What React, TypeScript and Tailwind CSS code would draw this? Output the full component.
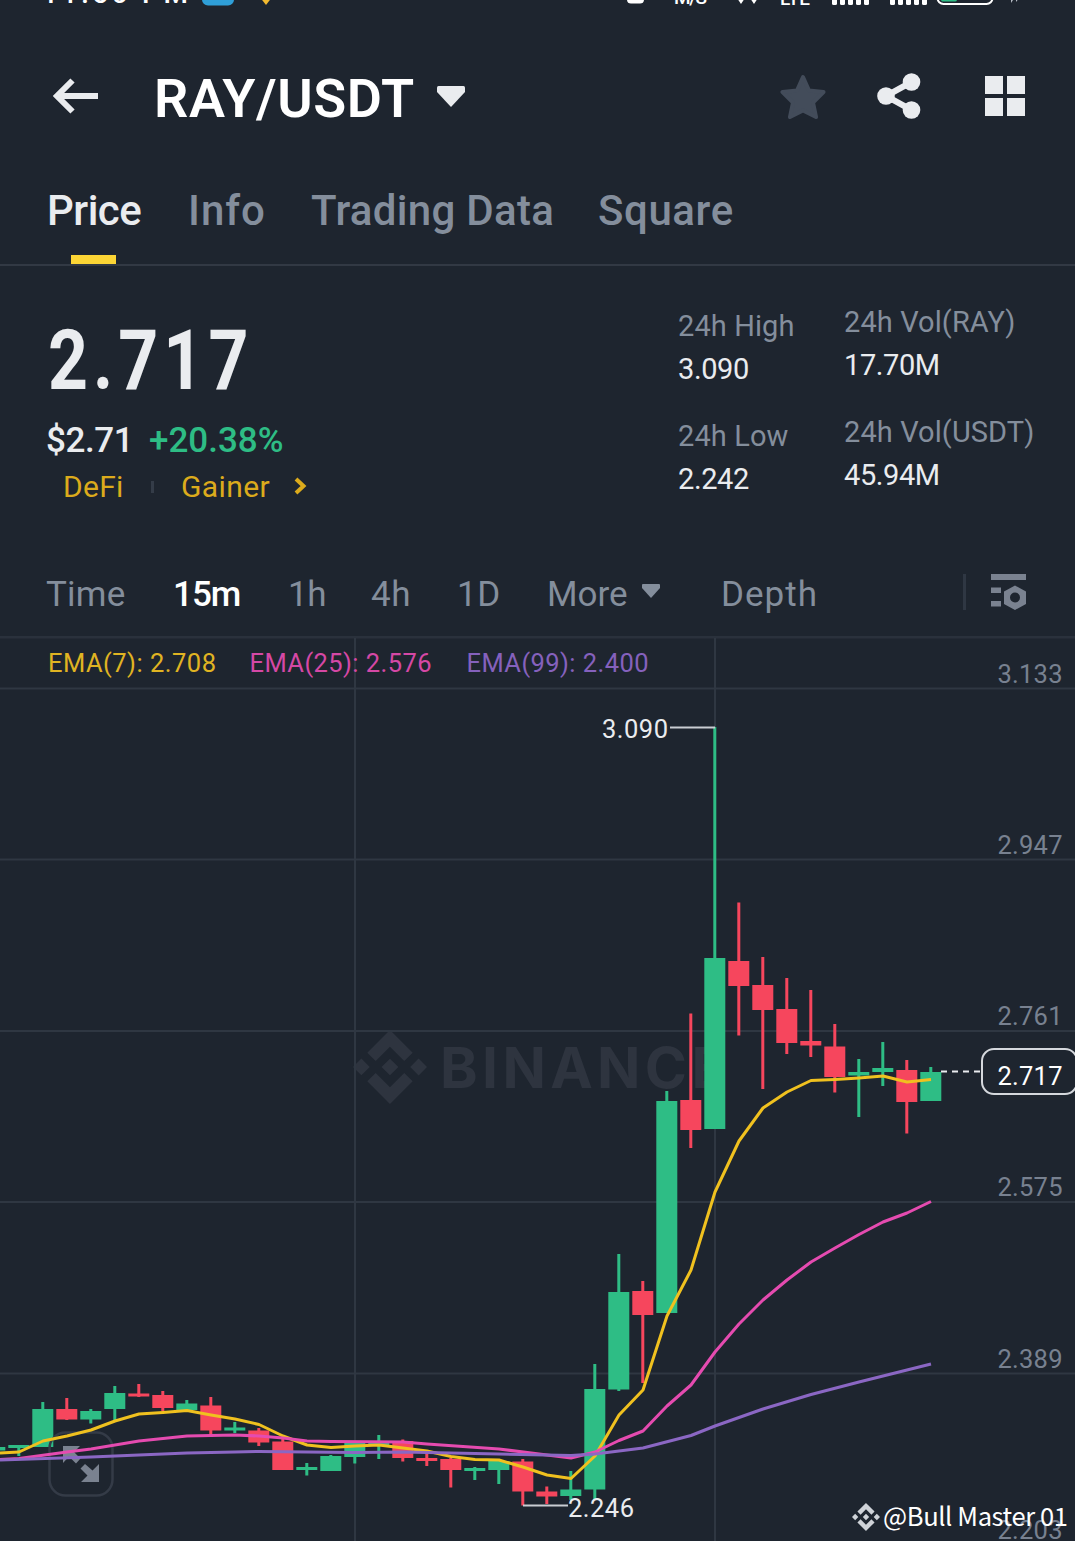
import { SiBinance } from 'react-icons/si';

type Candle = [high: number, top: number, bottom: number, low: number, up: 0 | 1];

const GREEN = '#2ebd85';
const RED = '#f6465d';

const STEP = 24;
const FIRST_X = -5.2;

const candles: Candle[] = [
  [1447, 1447, 1450.5, 1450.5, 1],
  [1445, 1445, 1448, 1456, 1],
  [1402, 1409, 1447, 1447, 1],
  [1398, 1409, 1419.5, 1420, 0],
  [1409, 1411, 1419.5, 1423.5, 1],
  [1386, 1393, 1409, 1420, 1],
  [1384, 1393.5, 1396.5, 1397, 0],
  [1391, 1395, 1408, 1411, 0],
  [1400, 1403.5, 1410, 1410, 1],
  [1397, 1405.5, 1430.5, 1434, 0],
  [1422, 1427.5, 1430.5, 1433, 1],
  [1428, 1430.5, 1442.5, 1446, 0],
  [1437, 1441.5, 1470, 1470, 0],
  [1463, 1467, 1470, 1475.5, 1],
  [1455, 1456, 1471, 1471, 1],
  [1443, 1443, 1457, 1463.5, 1],
  [1435, 1442, 1445, 1459, 1],
  [1439.5, 1441, 1458, 1461.5, 0],
  [1453, 1458, 1461, 1466, 0],
  [1458, 1459, 1470, 1487.5, 0],
  [1467, 1468, 1471, 1480, 1],
  [1460, 1461, 1470, 1484, 1],
  [1459, 1461.5, 1491.5, 1505.5, 0],
  [1486.5, 1491.5, 1496.5, 1504, 0],
  [1471, 1489.5, 1496, 1500, 1],
  [1364, 1389, 1489.5, 1500, 1],
  [1254, 1292, 1389.5, 1391, 1],
  [1281, 1291, 1315, 1383, 0],
  [1091, 1101, 1313, 1313, 1],
  [1013.5, 1100, 1130, 1148, 0],
  [727, 958, 1129, 1129, 1],
  [902.5, 961, 986, 1035.5, 0],
  [957, 985, 1010, 1089, 0],
  [978, 1009, 1043, 1054, 0],
  [990, 1041, 1045.5, 1057, 0],
  [1024, 1046.5, 1077, 1092.5, 0],
  [1059, 1072, 1075.5, 1117, 1],
  [1042, 1068, 1072, 1086, 1],
  [1060, 1070, 1102, 1133.5, 0],
  [1067, 1072, 1101, 1101, 1],
];

const ema7 =
  '0,1453 19,1452 43,1441 67,1436 91,1430 115,1421 139,1414 163,1412.5 187,1410.5 211,1415 235,1419 259,1424.5 283,1436 307,1445 331,1447.5 355,1446 379,1445 403,1448 427,1451 451,1456.5 475,1459.5 499,1460 523,1467 547,1475 571,1478.5 595,1456 619,1415 643,1390 667,1316 691,1270 715,1192 739,1141 763,1108 787,1092 811,1080.5 835,1079.5 859,1078 883,1076 907,1082 931,1079.5';
const ema25 =
  '0,1459.5 19,1458.5 67,1452 91,1449 139,1441 187,1436 235,1435 259,1436 283,1438 307,1441 331,1441.5 403,1442 427,1444 499,1449 547,1455 571,1458 595,1452 619,1440.5 643,1431 667,1406 691,1385 715,1352 739,1324 763,1300 787,1280 811,1262 835,1248 859,1234.5 883,1222 907,1213 931,1201.5';
const ema99 =
  '0,1460 91,1457 187,1453 235,1452 259,1451.5 355,1452.5 403,1452 499,1454 571,1455.5 595,1454 643,1448 691,1435.5 715,1426 763,1409 811,1394.5 859,1382 907,1370 931,1364';

const priceScale = [
  { label: '3.133', y: 688.5 },
  { label: '2.947', y: 859.5 },
  { label: '2.761', y: 1031 },
  { label: '2.575', y: 1202 },
  { label: '2.389', y: 1373.5 },
  { label: '2.203', y: 1545 },
];

const tabs = [
  { label: 'Price', style: 'w-[141px] tracking-[-0.5px] text-[#eaecef]' },
  { label: 'Info', style: 'w-[123px] tracking-[1px] text-[#848e9c]' },
  { label: 'Trading Data', style: 'w-[287px] tracking-[0.3px] text-[#848e9c]' },
  { label: 'Square', style: 'w-[140px] tracking-[0.6px] text-[#848e9c]' },
];

const Caret = ({ className }: { className: string }) => (
  <svg viewBox="0 0 28 21" preserveAspectRatio="none" className={className}>
    <path d="M0 1.5Q0 0 1.5 0h25Q28 0 28 1.5V6L14 21 0 6z" fill="currentColor" />
  </svg>
);

function StatusBar() {
  return (
    <div className="h-2 overflow-hidden">
      <svg width="1075" height="8" fill="#fff" fontFamily="Roboto" fontWeight="500">
        <text x="42" y="3" fontSize="28" textLength="146">11:50 PM</text>
        <rect x="202" y="-20" width="32" height="25.5" rx="6" fill="#2f9fd8" />
        <path d="M266-4l7 0-7 9-7-9z" fill="#f3ba2f" />
        <rect x="627" y="-12" width="17" height="15.5" rx="4" />
        <text x="674" y="4" fontSize="19" textLength="33">M/S</text>
        <path d="M737-2h8l-4 6zM750-2h8l-4 6z" />
        <text x="780" y="5" fontSize="19" textLength="30">LTE</text>
        {[832, 840, 848, 856, 864].map((x) => (
          <g key={x}>
            <rect x={x} y="-8" width="5" height="13" rx="1.5" />
            <rect x={x + 58} y="-8" width="5" height="13" rx="1.5" />
          </g>
        ))}
        <rect x="937.5" y="-18" width="55" height="22" rx="6" fill="none" stroke="#fff" strokeWidth="2" />
        <rect x="941" y="-16" width="16" height="17.5" rx="2" fill={GREEN} />
        <path d="M1011-3l4 0-4 6zM1016-3l4 0-4 5z" fill="#b7bdc6" />
      </svg>
    </div>
  );
}

function Header() {
  return (
    <header className="flex h-[176px] items-center pl-[52px] text-[#eaecef]">
      <svg width="46" height="36" fill="none" stroke="currentColor" strokeWidth="6">
        <path d="M4 18h42M20.500 2.500L5 18l15.500 15.500" />
      </svg>
      <h1 className="ml-[56px] w-[283px] pt-[5px] text-[54px] leading-none font-semibold tracking-[0.6px] whitespace-nowrap text-white">
        RAY/USDT
      </h1>
      <Caret className="h-[21px] w-7" />
      <svg width="46" height="46" viewBox="0 0 46 46" className="mt-0.5 ml-[315px] text-[#434c5a]">
        <path
          d="M23 3l6 13.500 14.500 1.500-10.500 10.500 3 14.500-13-6.500-13 6.500 3-14.500L2.500 18l14.500-1.500z"
          fill="currentColor"
          stroke="currentColor"
          strokeWidth="4"
          strokeLinejoin="round"
        />
      </svg>
      <svg width="44" height="46" viewBox="0 0 44 46" className="ml-[51px]" fill="currentColor">
        <path d="M34.500 9L9 23l25.500 14" fill="none" stroke="currentColor" strokeWidth="6" />
        <circle cx="9" cy="23" r="8.800" />
        <circle cx="34.500" cy="9" r="8.800" />
        <circle cx="34.500" cy="37" r="8.800" />
      </svg>
      <div className="ml-16 grid grid-cols-2 gap-1">
        {[0, 1, 2, 3].map((i) => (
          <span key={i} className="size-[18px] bg-[#eaecef]" />
        ))}
      </div>
    </header>
  );
}

function Stat({ label, value }: { label: string; value: string }) {
  return (
    <div>
      <div className="h-[43px] text-[29px] leading-[30px] tracking-[0.1px] whitespace-nowrap text-[#848e9c]">
        {label}
      </div>
      <div className="text-[29px] leading-[30px] tracking-[-0.4px] text-[#eaecef]">{value}</div>
    </div>
  );
}

function Summary() {
  return (
    <section className="flex h-[281px]">
      <div className="w-[678px] pt-[53px] pl-[48px]">
        <div className="h-[84px] w-[240px] origin-left scale-x-[0.84] text-[83px] leading-[84px] font-bold tracking-[6px] text-[#eaecef]">
          2.717
        </div>
        <div className="mt-[19px] -ml-0.5 flex text-[35px] leading-[38px] font-medium">
          <span className="w-[103px] tracking-[-0.4px] text-[#eaecef]">$2.71</span>
          <span className="text-[#2ebd85]">+20.38%</span>
        </div>
        <div className="mt-[12px] flex items-center pl-[15px] text-[30px] leading-[30px] text-[#dcab1c]">
          <span className="w-[88px] tracking-[0.3px]">DeFi</span>
          <span className="h-3 w-[3px] bg-[#343c48]" />
          <span className="ml-[27px] w-[113px] tracking-[0.4px]">Gainer</span>
          <svg width="14" height="18" fill="none" stroke="currentColor" strokeWidth="4" className="mb-0.5">
            <path d="M2 2l7.500 7L2 16" />
          </svg>
        </div>
      </div>
      <div className="flex w-[166px] flex-col gap-[37px] pt-[45px]">
        <Stat label="24h High" value="3.090" />
        <Stat label="24h Low" value="2.242" />
      </div>
      <div className="flex flex-col gap-[37px] pt-[41px]">
        <Stat label="24h Vol(RAY)" value="17.70M" />
        <Stat label="24h Vol(USDT)" value="45.94M" />
      </div>
    </section>
  );
}

function IntervalBar() {
  return (
    <nav className="flex h-[89px] items-center pt-1 pl-[46px] text-[35px] leading-none tracking-[0.5px] whitespace-nowrap text-[#848e9c]">
      <span className="w-[127px] pt-0.5 tracking-[0.2px]">Time</span>
      <span className="w-[115px] pt-0.5 font-medium tracking-[-1px] text-white">15m</span>
      <span className="w-[83px] pt-0.5 tracking-[-0.5px]">1h</span>
      <span className="w-[86px] pt-0.5">4h</span>
      <span className="w-[90px] pt-0.5">1D</span>
      <span className="w-[95px] pt-0.5 tracking-normal">More</span>
      <Caret className="mb-1.5 h-[14px] w-[18px]" />
      <span className="ml-[61px] w-[242px] pt-0.5 tracking-[1px]">Depth</span>
      <span className="mb-1 h-9 w-[3px] bg-[#2f3743]" />
      <svg width="36" height="36" viewBox="0 0 36 36" className="mb-1 ml-[25px]" fill="#7a8290">
        <path d="M0 0h35v6H0zM0 13.500h10v5.500H0zM0 27h10v5.500H0z" />
        <path
          fillRule="evenodd"
          d="M24 11.500l11 6v12.500l-11 6-11-6V17.500zM24 18.500a5 5 0 1 0 0 10 5 5 0 0 0 0-10z"
        />
      </svg>
    </nav>
  );
}

function Chart() {
  return (
    <svg
      width="1075"
      height="905"
      viewBox="0 636 1075 905"
      className="block"
      fontFamily="Roboto, sans-serif"
      fontSize="25.500"
    >
      <g fill="#2e343f">
        <SiBinance x="353" y="1030" size={74} color="#2e343f" />
        <text x="440" y="1088" fontFamily="Inter" fontWeight="700" fontSize="57" textLength="286">
          BINANCE
        </text>
      </g>

      <g stroke="#2f3742" strokeWidth="2">
        <path d="M0 637H1075" stroke="#2a313c" strokeWidth="3" />
        {priceScale.map(({ y }) => (
          <path key={y} d={`M0 ${y}H1075`} />
        ))}
        <path d="M355 638V1541M715 638V1541" />
      </g>

      {candles.map(([high, top, bottom, low, up], i) => {
        const x = FIRST_X + i * STEP;
        return (
          <g key={i} fill={up ? GREEN : RED}>
            <rect x={x - 1.5} y={high} width="3" height={low - high} />
            <rect x={x - 10.5} y={top} width="21" height={bottom - top} />
          </g>
        );
      })}

      <rect x="49.500" y="1432.500" width="63" height="63" rx="16" fill="none" stroke="#343b47" strokeWidth="2.500" />
      <g fill="#7a8290">
        <path d="M63 1446h17l-6 6 6.500 6.500-4.500 5-7-7-6 6.500z" />
        <path d="M99 1464v18H81l6.500-6.500-7-7 4.500-4.500 7.500 6.500z" />
      </g>

      <g fill="none" strokeWidth="3" strokeLinejoin="round">
        <polyline points={ema7} stroke="#f0c11f" />
        <polyline points={ema25} stroke="#e54bb0" />
        <polyline points={ema99} stroke="#8b67c4" />
      </g>

      <text x="48" y="672" fill="#e0b422" textLength="168">EMA(7): 2.708</text>
      <text x="249.500" y="672" fill="#d548a5" textLength="182">EMA(25): 2.576</text>
      <text x="466.500" y="672" fill="#8561bd" textLength="182">EMA(99): 2.400</text>

      <g fill="#788190">
        {priceScale.map(({ label, y }) => (
          <text key={label} x="997.500" y={y - 6} textLength="65">{label}</text>
        ))}
      </g>

      <g fill="#eaecef">
        <text x="602" y="738" textLength="66">3.090</text>
        <text x="568" y="1517" textLength="66">2.246</text>
      </g>
      <path d="M670 727.500H715M523 1505.500H568" stroke="#c9cdd3" strokeWidth="2" />

      <path d="M941 1071.500H982" stroke="#eaecef" strokeWidth="2" strokeDasharray="6 5" />
      <rect x="982" y="1049" width="95" height="45" rx="12" fill="#1e252f" stroke="#d5d8dd" strokeWidth="2" />
      <text x="997.500" y="1085" fill="#fff" textLength="65">2.717</text>

      <g fill="#fff">
        <SiBinance x="852" y="1503" size={28} color="#cfd3d8" />
        <text x="883" y="1526" fontFamily="'Noto Sans CJK SC', sans-serif" textLength="185">
          @Bull Master 01
        </text>
      </g>
    </svg>
  );
}

export default function App() {
  return (
    <main className="h-[1541px] w-[1075px] overflow-hidden bg-[#1e252f] font-[Roboto,sans-serif]">
      <StatusBar />
      <Header />
      <nav className="flex h-[82px] border-b-2 border-[#323944] pt-0.5 pl-[47px]">
        {tabs.map(({ label, style }, i) => (
          <div key={label} className={`${style} whitespace-nowrap`}>
            <div className="h-[69px] pt-1 text-[42px] leading-[42px] font-medium">{label}</div>
            {i === 0 && <div className="ml-6 h-[9px] w-[45px] bg-[#fcd535]" />}
          </div>
        ))}
      </nav>
      <Summary />
      <IntervalBar />
      <Chart />
    </main>
  );
}
